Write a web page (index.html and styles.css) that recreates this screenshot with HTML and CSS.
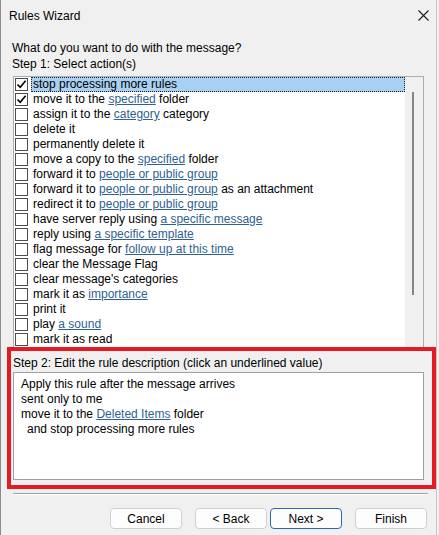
FILE: index.html
```html
<!doctype html>
<html>
	<head>
		<meta charset="utf-8"/>
		<title>Rules Wizard</title>
		<link rel="stylesheet" href="styles.css">
	</head>
	<body>
		<div class="window">
			<!-- title bar -->
			<div class="titlebar">
				<span class="title">Rules Wizard</span>
				<svg class="close" width="11" height="11" viewBox="0 0 11 11"><path d="M0.5 0.5L10.5 10.5M10.5 0.5L0.5 10.5" stroke="#1a1a1a" stroke-width="1.1" fill="none"/></svg>
			</div>
			<div class="content">
				<div class="prompt">What do you want to do with the message?</div>
				<div class="prompt">Step 1: Select action(s)</div>
				<!-- step 1 list -->
				<div class="listbox">
					<ul class="actions">
						<li class="selected"><span class="check on"><svg width="11" height="11" viewBox="0 0 11 11"><path d="M1.5 5.5L4.2 8.3L9.6 1.8" stroke="#000" stroke-width="1.6" fill="none"/></svg></span><span class="label">stop processing more rules</span></li>
						<li><span class="check on"><svg width="11" height="11" viewBox="0 0 11 11"><path d="M1.5 5.5L4.2 8.3L9.6 1.8" stroke="#000" stroke-width="1.6" fill="none"/></svg></span><span class="label">move it to the <a href="#">specified</a> folder</span></li>
						<li><span class="check"></span><span class="label">assign it to the <a href="#">category</a> category</span></li>
						<li><span class="check"></span><span class="label">delete it</span></li>
						<li><span class="check"></span><span class="label">permanently delete it</span></li>
						<li><span class="check"></span><span class="label">move a copy to the <a href="#">specified</a> folder</span></li>
						<li><span class="check"></span><span class="label">forward it to <a href="#">people or public group</a></span></li>
						<li><span class="check"></span><span class="label">forward it to <a href="#">people or public group</a> as an attachment</span></li>
						<li><span class="check"></span><span class="label">redirect it to <a href="#">people or public group</a></span></li>
						<li><span class="check"></span><span class="label">have server reply using <a href="#">a specific message</a></span></li>
						<li><span class="check"></span><span class="label">reply using <a href="#">a specific template</a></span></li>
						<li><span class="check"></span><span class="label">flag message for <a href="#">follow up at this time</a></span></li>
						<li><span class="check"></span><span class="label">clear the Message Flag</span></li>
						<li><span class="check"></span><span class="label">clear message's categories</span></li>
						<li><span class="check"></span><span class="label">mark it as <a href="#">importance</a></span></li>
						<li><span class="check"></span><span class="label">print it</span></li>
						<li><span class="check"></span><span class="label">play <a href="#">a sound</a></span></li>
						<li><span class="check"></span><span class="label">mark it as read</span></li>
					</ul>
					<div class="scrollbar"><div class="thumb"></div></div>
				</div>
				<!-- step 2 -->
				<div class="step2">
					<div class="prompt">Step 2: Edit the rule description (click an underlined value)</div>
					<div class="desc">
						<div>Apply this rule after the message arrives</div>
						<div>sent only to me</div>
						<div>move it to the <a href="#">Deleted Items</a> folder</div>
						<div class="indent">and stop processing more rules</div>
					</div>
				</div>
				<div class="sep"></div>
				<div class="buttons">
					<button class="btn">Cancel</button>
					<button class="btn back">&lt; Back</button>
					<button class="btn default">Next &gt;</button>
					<button class="btn finish">Finish</button>
				</div>
			</div>
		</div>
	</body>
</html>
```

FILE: styles.css
```css
html, body {
	margin: 0;
	padding: 0;
	background: #f0f0f0;
}
body {
	font-family: "Segoe UI", "Liberation Sans", Arial, sans-serif;
	font-size: 12px;
	color: #000;
}
a {
	color: #2f5f93;
	text-decoration: underline;
}
.window {
	width: 437px;
	height: 535px;
	border-left: 1px solid #8c8c8c;
	border-right: 1px solid #c8c8c8;
	box-sizing: border-box;
}
.titlebar {
	height: 32px;
	display: flex;
	align-items: center;
	justify-content: space-between;
	padding: 0 7px 0 8px;
}
.title {
	font-size: 12px;
}
.close {
	margin-top: -1px;
}
.content {
	padding: 8px 0 0 11px;
}
.prompt {
	line-height: 16px;
	height: 16px;
}
.listbox {
	margin-top: 4px;
	margin-left: 1px;
	width: 411px;
	height: 272px;
	box-sizing: border-box;
	border: 1px solid #abadb3;
	background: #fff;
	display: flex;
}
.actions {
	list-style: none;
	margin: 0;
	padding: 0;
	flex: 1;
}
.actions li {
	height: 15px;
	line-height: 15px;
	display: flex;
	align-items: center;
	white-space: nowrap;
}
.check {
	width: 13px;
	height: 13px;
	box-sizing: border-box;
	border: 1px solid #4d4d4d;
	background: #fff;
	margin-left: 1px;
	margin-right: 3px;
	display: flex;
	align-items: center;
	justify-content: center;
	flex: none;
}
.label {
	padding-left: 2px;
	flex: 1;
	height: 15px;
	box-sizing: border-box;
}
.selected .label {
	background: #a8d0f2;
	border: 1px dotted #222;
	padding-left: 1px;
	line-height: 13px;
}
.scrollbar {
	width: 18px;
	background: #f0f0f0;
	position: relative;
	flex: none;
}
.thumb {
	position: absolute;
	left: 7px;
	top: 15px;
	width: 2px;
	height: 203px;
	background: #858585;
}
.step2 {
	margin: -1px 0 0 -5px;
	width: 429px;
	height: 142px;
	box-sizing: border-box;
	border: 4px solid #e31b23;
	padding: 5px 8px 0 2px;
}
.step2 .prompt {
	height: 15px;
	line-height: 15px;
}
.desc {
	margin-top: 1px;
	height: 108px;
	box-sizing: border-box;
	border: 1px solid #a0a0a0;
	background: #fff;
	padding: 4px 0 0 7px;
}
.desc div {
	line-height: 15px;
}
.desc .indent {
	padding-left: 6px;
}
.sep {
	margin: 4px 0 0 1px;
	width: 415px;
	border-top: 1px solid #a0a0a0;
	border-bottom: 1px solid #fff;
}
.buttons {
	display: flex;
	padding: 13px 0 0 98px;
}
.btn {
	width: 72px;
	height: 21px;
	font-family: "Segoe UI", "Liberation Sans", Arial, sans-serif;
	font-size: 12px;
	background: #fdfdfd;
	border: 1px solid #d0d0d0;
	border-radius: 4px;
	padding: 0;
	color: #000;
}
.back {
	margin-left: 13px;
}
.default {
	margin-left: 3px;
	border-color: #2d68b0;
}
.finish {
	margin-left: 13px;
}
```
